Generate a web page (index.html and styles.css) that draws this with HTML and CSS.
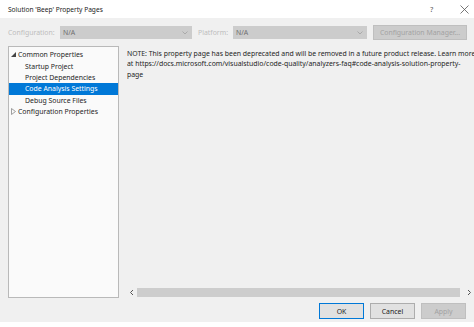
FILE: index.html
```html
<!DOCTYPE html>
<html lang="en">
<head>
    <meta charset="UTF-8">
    <title>Solution 'Beep' Property Pages</title>
    <link rel="stylesheet" href="styles.css">
</head>
<body>

<div class="window">
    <div class="titlebar">
        <span class="title">Solution 'Beep' Property Pages</span>
        <span class="help">?</span>
        <span class="close">
            <svg width="9" height="9" viewBox="0 0 9 9"><path d="M0.5 0.5L8.5 8.5M8.5 0.5L0.5 8.5" stroke="#555" stroke-width="0.8" fill="none"/></svg>
        </span>
    </div>

    <div class="dialog">
        <div class="toprow">
            <span class="label">Configuration:</span>
            <div class="combo combo-config">
                <span>N/A</span>
                <svg width="6" height="4" viewBox="0 0 6 4"><path d="M0.5 0.5L3 3L5.5 0.5" stroke="#aaaaaa" fill="none"/></svg>
            </div>
            <span class="label label-platform">Platform:</span>
            <div class="combo combo-platform">
                <span>N/A</span>
                <svg width="6" height="4" viewBox="0 0 6 4"><path d="M0.5 0.5L3 3L5.5 0.5" stroke="#aaaaaa" fill="none"/></svg>
            </div>
            <div class="btn btn-disabled btn-manager">Configuration Manager...</div>
        </div>

        <div class="main">
            <ul class="tree">
                <li class="node">
                    <svg class="arrow" width="5" height="5" viewBox="0 0 5 5"><path d="M5 0L5 5L0 5Z" fill="#444"/></svg>Common Properties
                </li>
                <li class="node child">Startup Project</li>
                <li class="node child">Project Dependencies</li>
                <li class="node child selected">Code Analysis Settings</li>
                <li class="node child">Debug Source Files</li>
                <li class="node">
                    <svg class="arrow" width="5" height="7" viewBox="0 0 5 7"><path d="M0.5 0.5L4.5 3.5L0.5 6.5Z" fill="none" stroke="#888" stroke-width="0.8"/></svg>Configuration Properties
                </li>
            </ul>

            <div class="page">
                <div class="content">
                    <div class="line">NOTE: This property page has been deprecated and will be removed in a future product release. Learn more</div>
                    <div class="line">at https://docs.microsoft.com/visualstudio/code-quality/analyzers-faq#code-analysis-solution-property-</div>
                    <div class="line">page</div>
                </div>
                <div class="hscroll">
                    <svg class="scroll-arrow" width="10" height="9" viewBox="0 0 10 9"><path d="M6 2L3.5 4.5L6 7" stroke="#555" stroke-width="1" fill="none"/></svg>
                    <div class="thumb"></div>
                    <svg class="scroll-arrow" width="10" height="9" viewBox="0 0 10 9"><path d="M4 2L6.5 4.5L4 7" stroke="#555" stroke-width="1" fill="none"/></svg>
                </div>
            </div>
        </div>

        <div class="buttons">
            <div class="btn btn-default">OK</div>
            <div class="btn">Cancel</div>
            <div class="btn btn-disabled">Apply</div>
        </div>
    </div>
</div>

</body>
</html>
```

FILE: styles.css
```css
body {
    margin: 0;
    font-family: "Noto Sans", "Open Sans", sans-serif;
    font-size: 6.9px;
    color: #1e1e1e;
    background-color: #ffffff;
}

.window {
    width: 474px;
    height: 327px;
    overflow: hidden;
}

.titlebar {
    height: 18px;
    display: flex;
    align-items: center;
    padding-left: 8px;
    background-color: #ffffff;
}

.title {
    flex: 1;
    font-size: 6.6px;
    color: #222;
}

.help {
    width: 30px;
    color: #555;
    font-size: 7.5px;
}

.close {
    width: 14px;
    display: flex;
    align-items: center;
}

.dialog {
    height: 304px;
    background-color: #f0f0f0;
    display: flex;
    flex-direction: column;
}

.toprow {
    display: flex;
    align-items: center;
    height: 15px;
    margin-top: 7px;
    padding-left: 8px;
    white-space: nowrap;
}

.label {
    color: #bdbdbd;
    width: 52px;
}

.label-platform {
    width: 35px;
    margin-left: 6px;
}

.combo {
    height: 13px;
    background-color: #cccccc;
    display: flex;
    align-items: center;
    justify-content: space-between;
    padding: 0 4px 0 3px;
    box-sizing: border-box;
    color: #6e6e6e;
}

.combo-config {
    width: 132px;
}

.combo-platform {
    width: 134px;
}

.btn {
    width: 45px;
    height: 16px;
    box-sizing: border-box;
    display: flex;
    align-items: center;
    justify-content: center;
    background-color: #e1e1e1;
    border: 1px solid #adadad;
    color: #222;
    white-space: nowrap;
}

.btn-disabled {
    background-color: #cccccc;
    border-color: #bfbfbf;
    color: #a2a2a2;
}

.btn-manager {
    width: 94px;
    height: 15px;
    margin-left: 6px;
}

.btn-default {
    border-color: #0078d7;
}

.main {
    display: flex;
    margin-top: 6px;
    height: 252px;
    padding-left: 8px;
}

.tree {
    list-style: none;
    margin: 0;
    padding: 2px 0 0 0;
    width: 111px;
    box-sizing: border-box;
    border: 1px solid #b9b9b9;
    background-color: #fafafa;
}

.node {
    display: flex;
    align-items: center;
    height: 11.4px;
    padding-left: 2px;
    white-space: nowrap;
}

.child {
    padding-left: 16px;
}

.selected {
    background-color: #0078d7;
    color: #ffffff;
}

.arrow {
    margin-right: 2px;
}

.page {
    flex: 1;
    display: flex;
    flex-direction: column;
    padding-left: 8px;
    min-width: 0;
}

.content {
    flex: 1;
    overflow: hidden;
    padding-top: 3px;
}

.line {
    white-space: nowrap;
    height: 10.3px;
    line-height: 10.3px;
}

.hscroll {
    display: flex;
    align-items: center;
    height: 10px;
    margin-bottom: 1px;
}

.thumb {
    flex: 1;
    height: 9px;
    background-color: #cdcdcd;
    margin-right: 4px;
}

.buttons {
    display: flex;
    justify-content: flex-end;
    gap: 6px;
    margin-top: 5px;
    padding-right: 8px;
}
```
